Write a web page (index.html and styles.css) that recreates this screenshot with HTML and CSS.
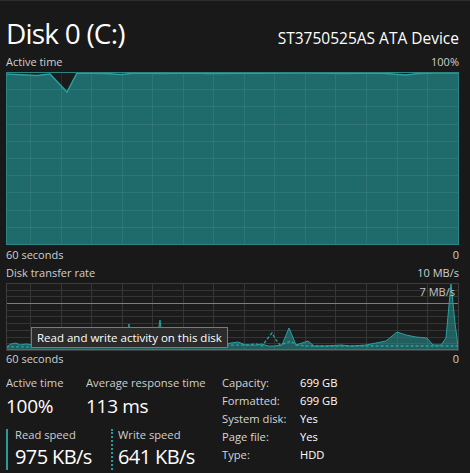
FILE: index.html
```html
<!DOCTYPE html>
<html lang="en">
<head>
<meta charset="utf-8">
<title>Disk 0 (C:)</title>
<link rel="stylesheet" href="styles.css">
</head>
<body>
<div class="page">
  <header class="head">
    <h1 class="title">Disk 0 (C:)</h1>
    <div class="device">ST3750525AS ATA Device</div>
  </header>

  <div class="axis axis-above"><span>Active time</span><span>100%</span></div>
  <div class="graph graph-active">
    <svg width="453" height="173" viewBox="0 0 453 173">
      <rect x="0" y="0" width="453" height="173" fill="#1b1b1b"/>
      <polygon fill="#1f6b6b" points="0,2 31,3.5 44,2 61,20 71,1 100,1.5 115,2.5 130,1 155,1.5 190,1 200,1.5 300,1 340,1.5 360,1 380,1.5 400,3 412,1.5 430,1 453,1 453,173 0,173"/>
      <g stroke="rgba(255,255,255,0.07)" stroke-width="1">
        <path d="M24.5 0V173M55.5 0V173M85.5 0V173M116.5 0V173M146.5 0V173M177.5 0V173M207.5 0V173M238.5 0V173M268.5 0V173M299.5 0V173M329.5 0V173M360.5 0V173M391.5 0V173M421.5 0V173"/>
        <path d="M0 17.5H453M0 34.5H453M0 52.5H453M0 69.5H453M0 86.5H453M0 103.5H453M0 120.5H453M0 138.5H453M0 155.5H453"/>
      </g>
      <polyline fill="none" stroke="#2aa0a0" stroke-width="1.5" points="0,2 31,3.5 44,2 61,20 71,1 100,1.5 115,2.5 130,1 155,1.5 190,1 200,1.5 300,1 340,1.5 360,1 380,1.5 400,3 412,1.5 430,1 453,1"/>
      <rect x="0.5" y="0.5" width="452" height="172" fill="none" stroke="#2a8585"/>
    </svg>
  </div>
  <div class="axis axis-below"><span>60 seconds</span><span>0</span></div>

  <div class="axis axis-above"><span>Disk transfer rate</span><span>10 MB/s</span></div>
  <div class="graph graph-rate">
    <svg width="453" height="68" viewBox="0 0 453 68">
      <rect x="0" y="0" width="453" height="68" fill="#1b1b1b"/>
      <g stroke="#353535" stroke-width="1">
        <path d="M24.5 0V68M55.5 0V68M85.5 0V68M116.5 0V68M146.5 0V68M177.5 0V68M207.5 0V68M238.5 0V68M268.5 0V68M299.5 0V68M329.5 0V68M360.5 0V68M391.5 0V68M421.5 0V68"/>
        <path d="M0 7.5H453M0 13.5H453M0 27.5H453M0 33.5H453M0 40.5H453M0 47.5H453M0 54.5H453M0 60.5H453"/>
      </g>
      <path d="M0 20.5H453" stroke="#2aa0a0" stroke-width="1"/>
      <polygon fill="rgba(38,150,150,0.55)" stroke="#2aa0a0" stroke-width="1" points="0,64 5,61 10,60 14,62 20,61 28,62 40,63 60,63 90,63 110,63 120,63 123,41 125,63 150,62 154,37 157,62 190,63 215,62 225,60 232,59 240,62 250,62 256,61 262,63 268,63 276,62 283,45 290,62 296,60 302,58 308,63 320,63 335,62 345,63 360,62 370,60 380,58 391,49 400,52 410,54 421,55 427,62 435,62 440,55 445,0 449,40 452,63 452,67 0,67"/>
      <polyline fill="none" stroke="#2aa0a0" stroke-width="1.3" stroke-dasharray="3 2" points="0,64 240,62 250,61 256,63 262,55 266,50 270,57 274,62 280,60 285,58 290,62 300,63 452,63"/>
      <rect x="0.5" y="0.5" width="452" height="67" fill="none" stroke="#3c3c3c"/>
    </svg>
    <span class="mark">7 MB/s</span>
    <div class="tooltip">Read and write activity on this disk</div>
  </div>
  <div class="axis"><span>60 seconds</span><span>0</span></div>

  <section class="stats">
    <div class="live">
      <div class="live-row">
        <div class="stat stat-active">
          <div class="label">Active time</div>
          <div class="value">100%</div>
        </div>
        <div class="stat">
          <div class="label">Average response time</div>
          <div class="value">113 ms</div>
        </div>
      </div>
      <div class="live-row live-speeds">
        <div class="speed speed-read">
          <div class="label label-tight">Read speed</div>
          <div class="value value-big">975 KB/s</div>
        </div>
        <div class="speed speed-write">
          <div class="label label-tight">Write speed</div>
          <div class="value value-big">641 KB/s</div>
        </div>
      </div>
    </div>
    <dl class="props">
      <dt>Capacity:</dt><dd>699 GB</dd>
      <dt>Formatted:</dt><dd>699 GB</dd>
      <dt>System disk:</dt><dd>Yes</dd>
      <dt>Page file:</dt><dd>Yes</dd>
      <dt>Type:</dt><dd>HDD</dd>
    </dl>
  </section>
</div>
</body>
</html>
```

FILE: styles.css
```css
html, body {
  margin: 0;
  padding: 0;
  background: #191919;
}

body {
  font-family: "Open Sans", "Noto Sans", sans-serif;
  color: #d6d6d6;
  width: 470px;
  height: 473px;
  overflow: hidden;
  border-top: 1px solid #2c2d31;
  box-sizing: border-box;
}

.page {
  padding: 0 11px 0 6px;
}

.head {
  display: flex;
  justify-content: space-between;
  align-items: baseline;
  padding-top: 12px;
  height: 41px;
}

.title {
  margin: 0;
  font-size: 28px;
  font-weight: 400;
  color: #ffffff;
  line-height: 41px;
  letter-spacing: -0.8px;
}

.device {
  font-size: 15.5px;
  line-height: 41px;
  color: #ffffff;
}

.axis {
  display: flex;
  justify-content: space-between;
  font-size: 11px;
  line-height: 16px;
  color: #cfcfcf;
}

.axis-above {
  margin-bottom: 2px;
}

.axis-below {
  margin-bottom: 2px;
}

.graph {
  position: relative;
  height: 173px;
}

.graph-active {
  margin-bottom: 2px;
}

.graph svg {
  display: block;
}

.graph-rate {
  height: 68px;
}

.mark {
  position: absolute;
  right: 4px;
  top: 2px;
  font-size: 11px;
  line-height: 14px;
  color: #c4c4c4;
}

.tooltip {
  position: absolute;
  left: 25px;
  top: 44px;
  padding: 1px 5px;
  background: #2b2b2b;
  border: 1px solid #7a7a7a;
  color: #ffffff;
  font-size: 11.5px;
  line-height: 17px;
  white-space: nowrap;
}

.stats {
  display: flex;
  margin-top: 8px;
}

.live {
  width: 216px;
  display: flex;
  flex-direction: column;
}

.live-row {
  display: flex;
}

.live-speeds {
  margin-top: 10px;
}

.stat-active {
  width: 80px;
}

.label {
  font-size: 11.2px;
  line-height: 16px;
  color: #cfcfcf;
}

.label-tight {
  line-height: 12px;
}

.value {
  margin-top: 2px;
  font-size: 19px;
  line-height: 26px;
  letter-spacing: -0.3px;
  color: #ffffff;
}

.value-big {
  font-size: 20px;
  line-height: 28px;
  letter-spacing: -0.6px;
}

.speed {
  height: 41px;
}

.speed-read {
  width: 96px;
  padding-left: 7px;
  border-left: 2px solid #2a9a9a;
}

.speed-write {
  padding-left: 5px;
  border-left: 2px dotted #2a9a9a;
}

.props {
  margin: -1px 0 0;
  display: grid;
  grid-template-columns: 78px auto;
  grid-auto-rows: 18px;
  font-size: 11.2px;
  line-height: 18px;
  color: #d6d6d6;
}

.props dt, .props dd {
  margin: 0;
}

.props dd {
  color: #ffffff;
}
```
